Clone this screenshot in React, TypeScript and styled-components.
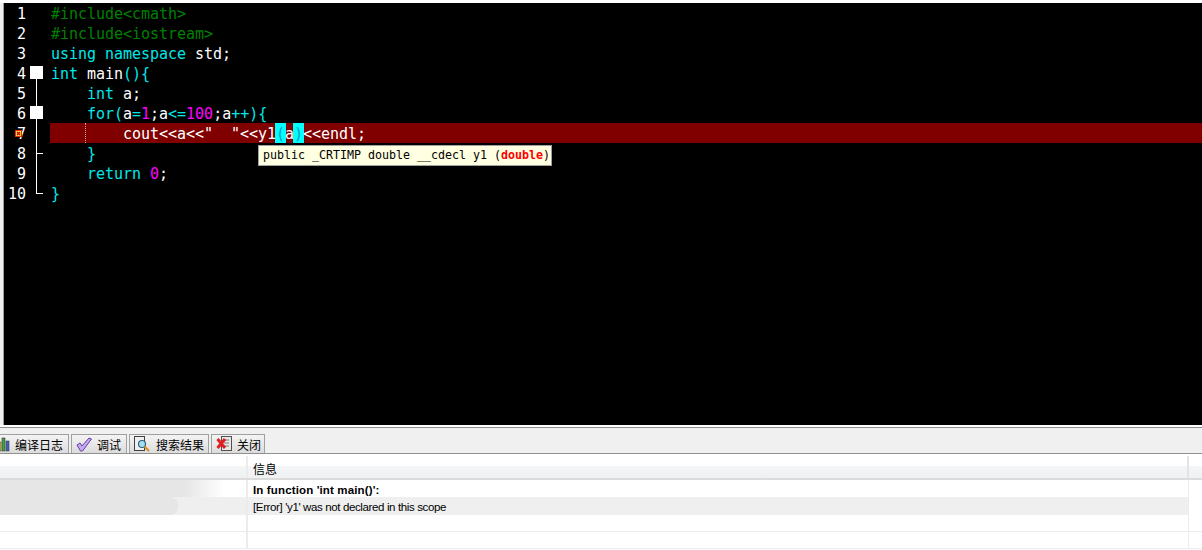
import React from 'react';
import styled, { createGlobalStyle } from 'styled-components';

const GlobalStyle = createGlobalStyle`
  html, body {
    margin: 0;
    padding: 0;
    background: #ffffff;
    overflow: hidden;
  }
`;

const Page = styled.div`
  width: 1202px;
  height: 550px;
  overflow: hidden;
  display: flex;
  flex-direction: column;
  background: #ffffff;
`;

const EditorFrame = styled.div`
  flex: none;
  height: 422px;
  margin-top: 3px;
  padding-left: 4px;
  background: linear-gradient(90deg, #f0f0f0 0, #f0f0f0 3px, #a0a0a0 3px, #a0a0a0 4px, #000 4px);
`;

const Editor = styled.div`
  height: 100%;
  background: #000000;
  font-family: 'DejaVu Sans Mono', monospace;
  font-size: 15px;
  color: #ffffff;
`;

const Row = styled.div`
  display: flex;
  height: 20px;
  line-height: 22px;
`;

const LineNumber = styled.div`
  position: relative;
  width: 22px;
  text-align: right;
  flex: none;
`;

const ErrorMark = styled.svg`
  position: absolute;
  left: 11px;
  top: 7px;
`;

const FoldCell = styled.div`
  position: relative;
  width: 24px;
  flex: none;
`;

const FoldLine = styled.div<{ $start?: boolean; $end?: boolean }>`
  position: absolute;
  left: 10px;
  top: ${({ $start }) => ($start ? '10px' : '0')};
  width: 1px;
  height: ${({ $start, $end }) => ($start || $end ? '10px' : '20px')};
  background: #ffffff;
`;

const FoldTick = styled.div`
  position: absolute;
  left: 10px;
  top: 10px;
  width: 7px;
  height: 1px;
  background: #ffffff;
`;

const FoldBox = styled.div`
  position: absolute;
  left: 4px;
  top: 3px;
  width: 13px;
  height: 13px;
  background: #ffffff;
`;

const Code = styled.div<{ $error?: boolean }>`
  position: relative;
  flex: 1;
  padding-left: 1px;
  white-space: pre;
  letter-spacing: -0.03px;
  background: ${({ $error }) => ($error ? '#800000' : 'transparent')};
`;

const IndentGuide = styled.div`
  position: absolute;
  left: 35px;
  top: 0;
  height: 20px;
  border-left: 1px dotted #d8a0a0;
`;

const Token = styled.span<{ $c?: string }>`
  color: ${({ $c }) => $c || '#ffffff'};
`;

const BraceMatch = styled.span`
  display: inline-block;
  width: 9px;
  height: 20px;
  color: #00a0c0;
  background: #00ffff;
  box-shadow: 1px 0 0 #00ffff, -1px 0 0 #00ffff;
`;

const Tooltip = styled.div`
  position: absolute;
  left: 208px;
  top: 22px;
  height: 19px;
  line-height: 19px;
  padding: 0 1px 0 4px;
  background: #ffffe1;
  border: 1px solid #a0a0a0;
  font-size: 11.63px;
  letter-spacing: 0;
  color: #000000;
  z-index: 2;
`;

const TooltipType = styled.span`
  color: #ff0000;
  font-weight: bold;
`;

const Dock = styled.div`
  flex: 1;
  display: flex;
  flex-direction: column;
`;

const TabBar = styled.div`
  flex: none;
  height: 25px;
  margin-top: 2px;
  border-top: 1px solid #909090;
  border-bottom: 1px solid #909090;
  background: #f0f0f0;
  display: flex;
  align-items: flex-end;
  gap: 2px;
  overflow: hidden;
`;

const Tab = styled.div<{ $w: number }>`
  display: flex;
  align-items: center;
  gap: 5px;
  width: ${({ $w }) => $w}px;
  height: 19px;
  padding-left: 4px;
  box-sizing: border-box;
  border: 1px solid #a0a0a0;
  border-bottom: 0;
  background: linear-gradient(#f4f4f4, #dcdcdc);
  font-family: 'Noto Sans CJK SC', sans-serif;
  font-size: 12px;
  color: #000000;
  flex: none;
`;

const TabFirst = styled(Tab)`
  padding-left: 0;
  border-left: 0;
`;

const Table = styled.div`
  flex: 1;
  display: flex;
  flex-direction: column;
  padding-top: 2px;
  font-family: 'Liberation Sans', sans-serif;
`;

const HeaderRow = styled.div`
  display: flex;
  height: 22px;
  flex: none;
  background: linear-gradient(#ffffff 0, #ffffff 10px, #f4f5f7 10px, #f0f1f3 100%);
  border-bottom: 2px solid #dcdcdc;
`;

const TableRow = styled.div<{ $h: number; $line?: boolean }>`
  display: flex;
  height: ${({ $h }) => $h}px;
  box-sizing: border-box;
  flex: none;
  border-bottom: ${({ $line }) => ($line ? '1px solid #ececec' : '0')};
`;

const FirstCell = styled.div<{ $shade?: boolean }>`
  width: 248px;
  box-sizing: border-box;
  flex: none;
  position: relative;
  border-right: 2px solid #ececec;
  background: ${({ $shade }) => ($shade ? '#efefef' : 'transparent')};
`;

const Smudge = styled.div<{ $w: number; $fade?: boolean }>`
  position: absolute;
  left: 0;
  top: 0;
  bottom: 0;
  width: ${({ $w }) => $w}px;
  background: ${({ $fade }) =>
    $fade ? 'linear-gradient(90deg, #e6e6e6 0, #e6e6e6 82%, #ffffff 100%)' : '#e6e6e6'};
  border-radius: 0 8px 8px 0;
`;

const HeaderText = styled.div`
  width: 941px;
  box-sizing: border-box;
  padding-left: 5px;
  flex: none;
  font-family: 'Noto Sans CJK SC', sans-serif;
  font-size: 12px;
  line-height: 26px;
  color: #000000;
  border-right: 2px solid #e4e4e4;
`;

const MessageCell = styled.div<{ $bold?: boolean; $shade?: boolean }>`
  width: 941px;
  box-sizing: border-box;
  padding-left: 5px;
  flex: none;
  font-size: 11.5px;
  line-height: 20px;
  font-weight: ${({ $bold }) => ($bold ? 'bold' : 'normal')};
  letter-spacing: ${({ $bold }) => ($bold ? '0.14px' : '-0.37px')};
  color: #000000;
  white-space: pre;
  border-right: 1px solid #ececec;
  background: ${({ $shade }) => ($shade ? '#efefef' : 'transparent')};
`;

const C = {
  kw: '#00e8e8',
  inc: '#008000',
  num: '#ff00ff',
};

type Seg = [string, string?];

const lines: Seg[][] = [
  [['#include<cmath>', C.inc]],
  [['#include<iostream>', C.inc]],
  [['using namespace', C.kw], [' std;']],
  [['int', C.kw], [' main'], ['(){', C.kw]],
  [['    '], ['int', C.kw], [' a;']],
  [
    ['    '], ['for(', C.kw], ['a'], ['=', C.kw], ['1', C.num], [';a'], ['<=', C.kw],
    ['100', C.num], [';a'], ['++){', C.kw],
  ],
  [],
  [['    '], ['}', C.kw]],
  [['    '], ['return', C.kw], [' '], ['0', C.num], [';']],
  [['}', C.kw]],
];

const BarsIcon = () => (
  <svg width="10" height="16" viewBox="0 0 10 16">
    <rect x="-2" y="6" width="3" height="9" fill="#d8c020" stroke="#404040" strokeWidth="0.6" />
    <rect x="2" y="2" width="3" height="13" fill="#40a040" stroke="#404040" strokeWidth="0.6" />
    <rect x="6" y="5" width="3" height="10" fill="#4060c0" stroke="#404040" strokeWidth="0.6" />
  </svg>
);

const CheckIcon = () => (
  <svg width="16" height="15" viewBox="0 0 16 15">
    <path d="M1 8 L4 6 L6 9 L13 1 L15.5 2 L6.5 14 L4.5 14 Z" fill="#c8a8f0" stroke="#6040a0" strokeWidth="1" />
  </svg>
);

const SearchIcon = () => (
  <svg width="17" height="16" viewBox="0 0 17 16">
    <rect x="0.5" y="0.5" width="10" height="14" fill="#f0f0f0" stroke="#404040" />
    <circle cx="8" cy="8" r="3.5" fill="#a0e0f0" stroke="#306080" strokeWidth="1.2" />
    <path d="M10.5 10.5 L15 15" stroke="#d09020" strokeWidth="2" />
  </svg>
);

const CloseIcon = () => (
  <svg width="16" height="16" viewBox="0 0 16 16">
    <rect x="5.5" y="0.5" width="10" height="14" fill="#e8e8e8" stroke="#505050" />
    <path d="M8 4 H13 M8 7 H13 M8 10 H13" stroke="#808080" />
    <path d="M1.5 3 L9 12 M9 3 L1.5 12" stroke="#e02020" strokeWidth="3" />
  </svg>
);

const ErrorIcon = () => (
  <ErrorMark width="7" height="7" viewBox="0 0 7 7">
    <rect x="0.5" y="0.5" width="6" height="6" fill="#ffe040" stroke="#e03000" />
    <path d="M2 2 L5 5 M5 2 L2 5" stroke="#c00000" strokeWidth="1.2" />
  </ErrorMark>
);

const folds = (i: number) => {
  const n = i + 1;
  if (n < 4) return null;
  return (
    <>
      <FoldLine $start={n === 4} $end={n === 10} />
      {n === 4 || n === 6 ? <FoldBox /> : null}
      {n === 8 || n === 10 ? <FoldTick /> : null}
    </>
  );
};

const ErrorLine = () => (
  <>
    <IndentGuide />
    {'        cout<<a<<"  "<<y1'}
    <BraceMatch>(</BraceMatch>a<BraceMatch>)</BraceMatch>
    {'<<endl;'}
    <Tooltip>
      public _CRTIMP double __cdecl y1 (<TooltipType>double</TooltipType>)
    </Tooltip>
  </>
);

const App: React.FC = () => (
  <Page>
    <GlobalStyle />
    <EditorFrame>
      <Editor>
        {lines.map((segs, i) => (
          <Row key={i}>
            <LineNumber>
              {i + 1}
              {i === 6 && <ErrorIcon />}
            </LineNumber>
            <FoldCell>{folds(i)}</FoldCell>
            <Code $error={i === 6}>
              {i === 6 && <ErrorLine />}
              {segs.map(([text, c], j) => (
                <Token key={j} $c={c}>
                  {text}
                </Token>
              ))}
            </Code>
          </Row>
        ))}
      </Editor>
    </EditorFrame>
    <Dock>
      <TabBar>
        <TabFirst $w={69}>
          <BarsIcon />
          编译日志
        </TabFirst>
        <Tab $w={56}>
          <CheckIcon />
          调试
        </Tab>
        <Tab $w={80}>
          <SearchIcon />
          搜索结果
        </Tab>
        <Tab $w={54}>
          <CloseIcon />
          关闭
        </Tab>
      </TabBar>
      <Table>
        <HeaderRow>
          <FirstCell />
          <HeaderText>信息</HeaderText>
        </HeaderRow>
        <TableRow $h={17}>
          <FirstCell>
            <Smudge $w={225} $fade />
          </FirstCell>
          <MessageCell $bold>In function 'int main()':</MessageCell>
        </TableRow>
        <TableRow $h={18}>
          <FirstCell $shade>
            <Smudge $w={178} />
          </FirstCell>
          <MessageCell $shade>[Error] 'y1' was not declared in this scope</MessageCell>
        </TableRow>
        <TableRow $h={17} $line>
          <FirstCell />
          <MessageCell />
        </TableRow>
        <TableRow $h={17} $line>
          <FirstCell />
          <MessageCell />
        </TableRow>
      </Table>
    </Dock>
  </Page>
);

export default App;
